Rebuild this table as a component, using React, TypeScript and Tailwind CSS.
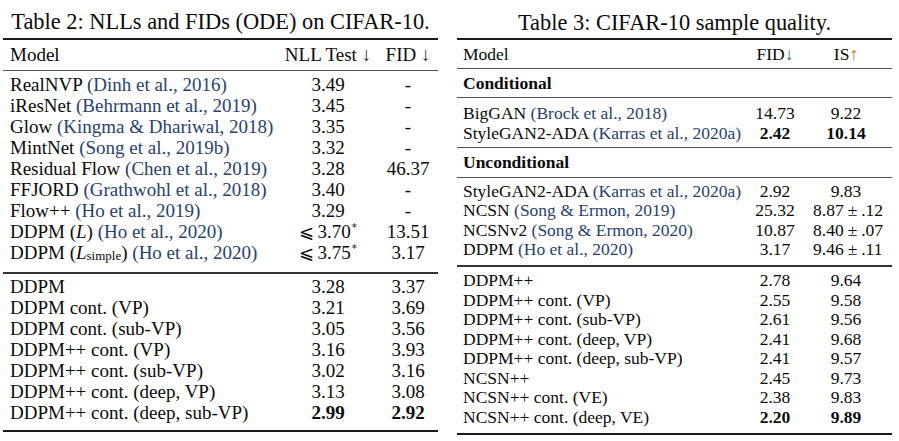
import React from "react";

const Cite = ({ children }: { children: React.ReactNode }) => (
  <span className="text-[#28426c]">{children}</span>
);

const Leq = () => (
  <span className="font-['DejaVu_Serif','Liberation_Serif',serif] text-[18px] mr-[3px]">⩽</span>
);

const Star = () => (
  <span className="font-['DejaVu_Sans',sans-serif] text-[10px] relative top-[-7px] ml-[1px]">*</span>
);

type LRow = { m: React.ReactNode; a: React.ReactNode; b: React.ReactNode };

const leftTop: LRow[] = [
  { m: <>RealNVP <Cite>(Dinh et al., 2016)</Cite></>, a: "3.49", b: "-" },
  { m: <>iResNet <Cite>(Behrmann et al., 2019)</Cite></>, a: "3.45", b: "-" },
  { m: <>Glow <Cite>(Kingma &amp; Dhariwal, 2018)</Cite></>, a: "3.35", b: "-" },
  { m: <>MintNet <Cite>(Song et al., 2019b)</Cite></>, a: "3.32", b: "-" },
  { m: <>Residual Flow <Cite>(Chen et al., 2019)</Cite></>, a: "3.28", b: "46.37" },
  { m: <>FFJORD <Cite>(Grathwohl et al., 2018)</Cite></>, a: "3.40", b: "-" },
  { m: <>Flow++ <Cite>(Ho et al., 2019)</Cite></>, a: "3.29", b: "-" },
  {
    m: <>DDPM (<i>L</i>) <Cite>(Ho et al., 2020)</Cite></>,
    a: <><Leq />3.70<Star /></>,
    b: "13.51",
  },
  {
    m: (
      <>
        DDPM (<i>L</i>
        <sub className="text-[13px] relative top-[1px]">simple</sub>) <Cite>(Ho et al., 2020)</Cite>
      </>
    ),
    a: <><Leq />3.75<Star /></>,
    b: "3.17",
  },
];

const leftBottom: LRow[] = [
  { m: "DDPM", a: "3.28", b: "3.37" },
  { m: "DDPM cont. (VP)", a: "3.21", b: "3.69" },
  { m: "DDPM cont. (sub-VP)", a: "3.05", b: "3.56" },
  { m: "DDPM++ cont. (VP)", a: "3.16", b: "3.93" },
  { m: "DDPM++ cont. (sub-VP)", a: "3.02", b: "3.16" },
  { m: "DDPM++ cont. (deep, VP)", a: "3.13", b: "3.08" },
  { m: "DDPM++ cont. (deep, sub-VP)", a: <b>2.99</b>, b: <b>2.92</b> },
];

const rightCond: LRow[] = [
  { m: <>BigGAN <Cite>(Brock et al., 2018)</Cite></>, a: "14.73", b: "9.22" },
  { m: <>StyleGAN2-ADA <Cite>(Karras et al., 2020a)</Cite></>, a: <b>2.42</b>, b: <b>10.14</b> },
];

const Pm = () => <span className="mx-[4px]">±</span>;

const rightUncond: LRow[] = [
  { m: <>StyleGAN2-ADA <Cite>(Karras et al., 2020a)</Cite></>, a: "2.92", b: "9.83" },
  { m: <>NCSN <Cite>(Song &amp; Ermon, 2019)</Cite></>, a: "25.32", b: <>8.87<Pm />.12</> },
  { m: <>NCSNv2 <Cite>(Song &amp; Ermon, 2020)</Cite></>, a: "10.87", b: <>8.40<Pm />.07</> },
  { m: <>DDPM <Cite>(Ho et al., 2020)</Cite></>, a: "3.17", b: <>9.46<Pm />.11</> },
];

const rightOurs: LRow[] = [
  { m: "DDPM++", a: "2.78", b: "9.64" },
  { m: "DDPM++ cont. (VP)", a: "2.55", b: "9.58" },
  { m: "DDPM++ cont. (sub-VP)", a: "2.61", b: "9.56" },
  { m: "DDPM++ cont. (deep, VP)", a: "2.41", b: "9.68" },
  { m: "DDPM++ cont. (deep, sub-VP)", a: "2.41", b: "9.57" },
  { m: "NCSN++", a: "2.45", b: "9.73" },
  { m: "NCSN++ cont. (VE)", a: "2.38", b: "9.83" },
  { m: "NCSN++ cont. (deep, VE)", a: <b>2.20</b>, b: <b>9.89</b> },
];

const LeftRow = ({ r }: { r: LRow }) => (
  <div className="flex h-[21px] items-center whitespace-nowrap">
    <div className="w-[275px] pl-[7px]">{r.m}</div>
    <div className="w-[100px] text-center">{r.a}</div>
    <div className="w-[60px] text-center">{r.b}</div>
  </div>
);

const RightRow = ({ r }: { r: LRow }) => (
  <div className="flex h-[19.5px] items-center whitespace-nowrap">
    <div className="w-[280px] pl-[6px]">{r.m}</div>
    <div className="w-[76px] text-center">{r.a}</div>
    <div className="w-[66px] text-center">{r.b}</div>
  </div>
);

const Thick = () => <div className="h-[2px] bg-[#1a1a1a]" />;
const Thin = () => <div className="h-px bg-[#555]" />;
const Mid = () => <div className="h-[1.5px] bg-[#333]" />;

export default function App() {
  return (
    <div className="w-[899px] h-[441px] bg-white text-[#0a0a0a] font-['Liberation_Serif',serif] flex overflow-hidden">
      {/* Left table */}
      <div className="ml-[3px] w-[435px] flex flex-col">
        <div className="mt-[10px] h-[24px] leading-[24px] text-[22.4px] text-center whitespace-nowrap">
          Table 2: NLLs and FIDs (ODE) on CIFAR-10.
        </div>
        <div className="mt-[4px]">
          <Thick />
        </div>
        <div className="flex h-[30px] items-center text-[19px] whitespace-nowrap">
          <div className="w-[275px] pl-[7px]">Model</div>
          <div className="w-[100px] text-center">
            NLL Test <span className="text-[#1d2b4a]">↓</span>
          </div>
          <div className="w-[60px] text-center">
            FID <span className="text-[#1d2b4a]">↓</span>
          </div>
        </div>
        <Thin />
        <div className="pt-[4px] pb-[8px] text-[19px]">
          {leftTop.map((r, i) => (
            <LeftRow key={i} r={r} />
          ))}
        </div>
        <Mid />
        <div className="pt-[3.5px] pb-[5.5px] text-[19px]">
          {leftBottom.map((r, i) => (
            <LeftRow key={i} r={r} />
          ))}
        </div>
        <Thick />
      </div>

      {/* Right table */}
      <div className="ml-[19px] w-[435px] flex flex-col">
        <div className="mt-[11px] h-[24px] leading-[24px] text-[22.4px] text-center whitespace-nowrap">
          Table 3: CIFAR-10 sample quality.
        </div>
        <div className="mt-[3px]">
          <Thick />
        </div>
        <div className="flex h-[28px] items-center text-[17.5px] whitespace-nowrap">
          <div className="w-[280px] pl-[6px]">Model</div>
          <div className="w-[76px] text-center">
            FID<span className="text-[#2f5f9e]">↓</span>
          </div>
          <div className="w-[66px] text-center">
            IS<span className="text-[#c96a2a]">↑</span>
          </div>
        </div>
        <Thin />
        <div className="flex h-[28px] items-center text-[17.5px] font-bold pl-[6px]">Conditional</div>
        <Thin />
        <div className="pt-[5.5px] pb-[4px] text-[17.5px]">
          {rightCond.map((r, i) => (
            <RightRow key={i} r={r} />
          ))}
        </div>
        <Thin />
        <div className="flex h-[29px] items-center text-[17.5px] font-bold pl-[6px]">Unconditional</div>
        <Thin />
        <div className="pt-[3.5px] pb-[6px] text-[17.5px]">
          {rightUncond.map((r, i) => (
            <RightRow key={i} r={r} />
          ))}
        </div>
        <Mid />
        <div className="pt-[4px] pb-[6px] text-[17.5px]">
          {rightOurs.map((r, i) => (
            <RightRow key={i} r={r} />
          ))}
        </div>
        <Thick />
      </div>
    </div>
  );
}
